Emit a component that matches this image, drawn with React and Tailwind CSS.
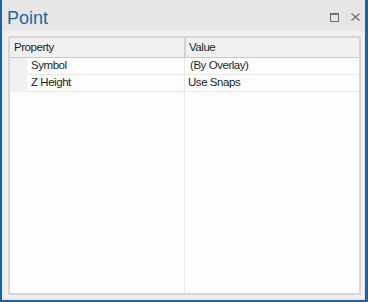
export default function App() {
  const narrow = { fontFamily: '"Liberation Sans", Arial, sans-serif', letterSpacing: "-0.45px" };
  const rows = [
    { k: "Symbol", v: "(By Overlay)", pad: "pl-[5px]" },
    { k: "Z Height", v: "Use Snaps", pad: "pl-[3px]" },
  ];
  return (
    <div className="w-[368px] h-[302px] bg-[#e6e6e6] border-l-2 border-r-[3px] border-b-2 border-[#1a65a0] flex flex-col">
      <div className="h-[31px] flex items-center justify-between pl-[5px] pr-[5px]">
        <span className="text-[18px] leading-none text-[#1d6aa3] mt-[5px]" style={{ fontFamily: '"Liberation Sans", Arial, sans-serif' }}>Point</span>
        <div className="flex items-center gap-[12px] mt-[3px]">
          <svg width="9" height="9" viewBox="0 0 9 9">
            <rect x="0.5" y="0.5" width="8" height="8" fill="none" stroke="#717171" />
            <line x1="0" y1="1.5" x2="9" y2="1.5" stroke="#717171" />
          </svg>
          <svg width="9" height="8" viewBox="0 0 9 8">
            <path d="M0.5 0.5 L8.5 7.5 M8.5 0.5 L0.5 7.5" stroke="#717171" strokeWidth="1.3" />
          </svg>
        </div>
      </div>
      <div className="flex-1 mx-[1px] mb-[2px] bg-[#f0f0f0] pt-[5px] pb-[3px] pl-[5px] pr-[3px] flex">
        <div className="flex-1 border-2 border-[#d6d6d6] bg-[#fdfdfd] flex flex-col text-[11.5px] text-[#1e1e1e]" style={narrow}>
          <div className="h-[20px] flex bg-[#f0f0f0] border-b border-[#c9c9c9]">
            <div className="w-[176px] flex items-center pl-[4px] border-r-2 border-[#d2d2d2]">Property</div>
            <div className="flex-1 flex items-center pl-[3px]">Value</div>
          </div>
          {rows.map((r) => (
            <div key={r.k} className="h-[17px] flex">
              <div className="w-[17px] bg-[#f0f0f0]" />
              <div className="w-[158px] flex items-center pl-[4px] border-b border-r border-[#e8e8e8]">{r.k}</div>
              <div className={"flex-1 flex items-center border-b border-[#e8e8e8] " + r.pad}>{r.v}</div>
            </div>
          ))}
          <div className="flex-1 flex">
            <div className="w-[175px] border-r border-[#ececec]" />
            <div className="flex-1" />
          </div>
        </div>
      </div>
    </div>
  );
}
